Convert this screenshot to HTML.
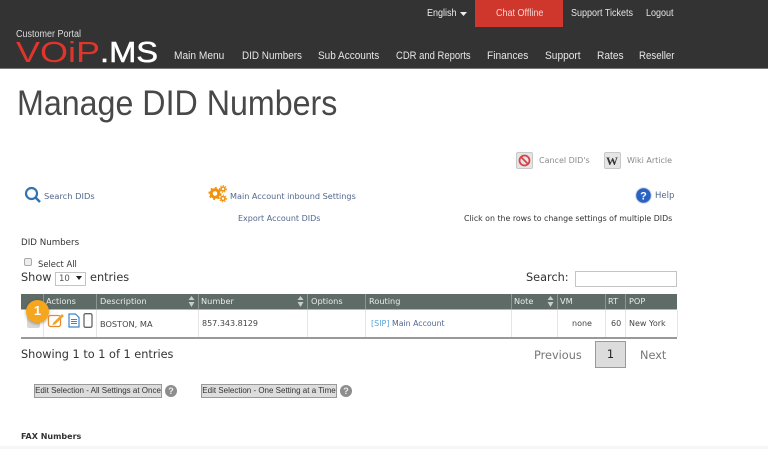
<!DOCTYPE html>
<html lang="en"><head><meta charset="utf-8"><title>Manage DID Numbers</title>
<style>
html,body{margin:0;padding:0;background:#fff}
#p{position:relative;width:768px;height:449px;overflow:hidden;background:#fff;font-family:"DejaVu Sans",sans-serif;color:#333}
#p div,#p svg{position:absolute}
.t{position:absolute;white-space:nowrap;line-height:14px;height:14px}
.n{font:11px/14px "Liberation Sans",sans-serif;color:#e6e6e6;transform:scaleX(.925);transform-origin:0 0}
.n2{font:10px/14px "Liberation Sans",sans-serif;color:#e6e6e6;transform:scaleX(.9);transform-origin:0 0}
.v{font-size:8px;color:#444}
.l{font-size:8px;color:#52678f}
.g{font-size:8px;color:#8a8a8a}
.h{font-size:8.2px;color:#e8ece9}
.b{font-size:11.3px;color:#333}
.btn{box-sizing:border-box;height:14px;background:#ddd;border:1px solid #999;font:8px/12px "Liberation Sans",sans-serif;color:#333;text-align:center;white-space:nowrap;overflow:hidden}
.q{width:12px;height:12px;border-radius:50%;background:#8d8d8d;color:#eee;font:bold 9px/12px "Liberation Sans",sans-serif;text-align:center}
.sq{box-sizing:border-box;background:#e5e5e5;border:1px solid #c8c8c8;border-radius:2px}
.s{width:1px;top:310px;height:27px;background:#e6e6e6}
.hs{width:1px;top:294px;height:15px;background:#8b9592}
</style></head><body><div id="p">

<div style="left:0;top:0;width:768px;height:68px;background:#333"></div>
<div style="left:0;top:68px;width:768px;height:1px;background:#777"></div>
<div style="left:475px;top:0;width:88px;height:27px;background:#cf372c"></div>

<span class="t n2" style="left:427px;top:7px;color:#eee">English</span>
<svg style="left:460px;top:12px" width="8" height="5"><path d="M0 0H7L3.500 4Z" fill="#eee"/></svg>
<span class="t n2" style="left:496px;top:7px;color:#f3d6d2">Chat Offline</span>
<span class="t n2" style="left:571px;top:7px">Support Tickets</span>
<span class="t n2" style="left:646px;top:7px">Logout</span>

<span class="t n2" style="left:16px;top:28px;color:#ddd">Customer Portal</span>
<svg style="left:16px;top:38px" width="145" height="26"><text x="0" y="24" font-family="Liberation Sans" font-size="29" fill="#e0352a" textLength="84" lengthAdjust="spacingAndGlyphs">VOiP</text><text x="84" y="24" font-family="Liberation Sans" font-size="29" fill="#fff" stroke="#fff" stroke-width=".5" textLength="58" lengthAdjust="spacingAndGlyphs">.MS</text></svg>

<span class="t n" style="left:174px;top:49px">Main Menu</span>
<span class="t n" style="left:242px;top:49px;transform:scaleX(.9)">DID Numbers</span>
<span class="t n" style="left:318px;top:49px;transform:scaleX(.91)">Sub Accounts</span>
<span class="t n" style="left:396px;top:49px;transform:scaleX(.86)">CDR and Reports</span>
<span class="t n" style="left:487px;top:49px">Finances</span>
<span class="t n" style="left:545px;top:49px">Support</span>
<span class="t n" style="left:597px;top:49px">Rates</span>
<span class="t n" style="left:639px;top:49px;transform:scaleX(.88)">Reseller</span>

<span class="t" style="left:17px;top:84px;height:40px;line-height:40px;font-family:'Liberation Sans',sans-serif;font-size:35px;color:#484848;transform:scaleX(.92);transform-origin:0 0">Manage DID Numbers</span>

<div class="sq" style="left:516px;top:152px;width:17px;height:17px"></div>
<svg style="left:516px;top:152px" width="17" height="17"><circle cx="8.500" cy="8.500" r="5" fill="none" stroke="#d8424a" stroke-width="1.800"/><path d="M5 5L12 12" stroke="#d8424a" stroke-width="1.800"/></svg>
<span class="t g" style="left:539px;top:154px">Cancel DID's</span>
<div class="sq" style="left:604px;top:152px;width:17px;height:17px"></div>
<span class="t" style="left:606px;top:154px;font:bold 12px/14px 'Liberation Serif',serif;color:#333">W</span>
<span class="t g" style="left:627px;top:154px">Wiki Article</span>

<svg style="left:24px;top:186px" width="18" height="18"><circle cx="7.500" cy="7.500" r="5.500" fill="none" stroke="#2f74b5" stroke-width="2.200"/><path d="M11.500 11.500L16 16" stroke="#2f74b5" stroke-width="2.500"/></svg>
<span class="t l" style="left:44px;top:189px;font-size:8.300px">Search DIDs</span>

<svg style="left:208px;top:185px" width="20" height="18"><g fill="none" stroke="#f2920c"><circle cx="7" cy="8.500" r="3.800" stroke-width="3"/><circle cx="7" cy="8.500" r="5.800" stroke-width="1.500" stroke-dasharray="2 2.500"/><circle cx="15" cy="4" r="2" stroke-width="1.600"/><circle cx="15" cy="4" r="3.400" stroke-width="1" stroke-dasharray="1.300 1.300"/><circle cx="15" cy="13.500" r="2" stroke-width="1.600"/><circle cx="15" cy="13.500" r="3.400" stroke-width="1" stroke-dasharray="1.300 1.300"/></g></svg>
<span class="t l" style="left:230px;top:189px;font-size:8.100px">Main Account inbound Settings</span>
<span class="t l" style="left:238px;top:212px">Export Account DIDs</span>

<svg style="left:635px;top:187px" width="17" height="17"><circle cx="8.500" cy="8.500" r="7.800" fill="#2a62c4" stroke="#cfd6e2" stroke-width="1"/><text x="8.500" y="12.500" text-anchor="middle" font-family="Liberation Sans" font-weight="bold" font-size="11" fill="#fff">?</text></svg>
<span class="t l" style="left:655px;top:189px;font-size:8.500px">Help</span>
<span class="t v" style="left:464px;top:212px;font-size:7.850px;color:#333">Click on the rows to change settings of multiple DIDs</span>

<span class="t v" style="left:21px;top:236px;font-size:8.700px;color:#333">DID Numbers</span>
<div style="left:24px;top:258px;width:6px;height:6px;border:1px solid #aaa;background:#eee;border-radius:2px"></div>
<span class="t v" style="left:38px;top:257px;font-size:8.400px;color:#333">Select All</span>

<span class="t b" style="left:21px;top:271px">Show</span>
<div style="left:55px;top:272px;width:29px;height:12px;border:1px solid #c4c4c4;background:#fff"></div>
<span class="t" style="left:59px;top:272px;font-size:8.500px;color:#555">10</span>
<svg style="left:76px;top:276px" width="7" height="5"><path d="M0 0H6L3 4Z" fill="#222"/></svg>
<span class="t b" style="left:90px;top:271px">entries</span>

<span class="t b" style="left:526px;top:271px">Search:</span>
<div style="left:575px;top:271px;width:100px;height:14px;border:1px solid #c4c4c4;background:#fff"></div>

<div style="left:21px;top:294px;width:656px;height:15px;background:#5f6b67"></div>
<div style="left:21px;top:309px;width:656px;height:1px;background:#b5b5b5"></div>
<div style="left:21px;top:337px;width:656px;height:2px;background:#999"></div>
<div class="hs" style="left:43px"></div><div class="hs" style="left:96px"></div><div class="hs" style="left:198px"></div><div class="hs" style="left:307px"></div><div class="hs" style="left:365px"></div><div class="hs" style="left:511px"></div><div class="hs" style="left:557px"></div><div class="hs" style="left:605px"></div><div class="hs" style="left:625px"></div>
<div class="s" style="left:43px"></div><div class="s" style="left:96px"></div><div class="s" style="left:198px"></div><div class="s" style="left:307px"></div><div class="s" style="left:365px"></div><div class="s" style="left:511px"></div><div class="s" style="left:557px"></div><div class="s" style="left:605px"></div><div class="s" style="left:625px"></div><div class="s" style="left:677px"></div>

<span class="t h" style="left:46px;top:294px">Actions</span>
<span class="t h" style="left:100px;top:294px">Description</span>
<svg style="left:188px;top:296px" width="7" height="11"><path d="M3.500 0L6.500 4H.5ZM3.500 11L.5 6H6.500Z" fill="#c7cdca"/></svg>
<span class="t h" style="left:201px;top:294px">Number</span>
<svg style="left:297px;top:296px" width="7" height="11"><path d="M3.500 0L6.500 4H.5ZM3.500 11L.5 6H6.500Z" fill="#c7cdca"/></svg>
<span class="t h" style="left:311px;top:294px">Options</span>
<span class="t h" style="left:369px;top:294px">Routing</span>
<span class="t h" style="left:514px;top:294px">Note</span>
<svg style="left:547px;top:296px" width="7" height="11"><path d="M3.500 0L6.500 4H.5ZM3.500 11L.5 6H6.500Z" fill="#c7cdca"/></svg>
<span class="t h" style="left:560px;top:294px">VM</span>
<span class="t h" style="left:608px;top:294px">RT</span>
<span class="t h" style="left:629px;top:294px">POP</span>

<div style="left:27px;top:316px;width:13px;height:12px;background:#d8d8d8;border-radius:2px"></div>
<div style="left:26px;top:300px;width:23px;height:23px;border-radius:50%;background:#f5a61d;box-shadow:0 1px 3px rgba(0,0,0,.35)"></div>
<span class="t" style="left:26px;top:304px;width:23px;text-align:center;font:bold 13px/14px 'Liberation Sans',sans-serif;color:#fff">1</span>

<svg style="left:47px;top:312px" width="18" height="16"><rect x="1.500" y="3.500" width="12" height="11" rx="2" fill="#fff" stroke="#e8892b" stroke-width="1.300"/><path d="M6 11L15 2L17 4L8 12.500L5.500 13Z" fill="#f0a22e"/></svg>
<svg style="left:68px;top:313px" width="12" height="15"><path d="M1 1H7.500L11 4.500V14H1Z" fill="#fff" stroke="#3c86c8" stroke-width="1.200"/><path d="M3 6.500H9M3 8.500H9M3 10.500H9" stroke="#3c86c8"/></svg>
<svg style="left:83px;top:313px" width="10" height="15"><rect x="1" y=".7" width="8" height="13.600" rx="1.500" fill="#fff" stroke="#666" stroke-width="1.300"/></svg>

<span class="t v" style="left:100px;top:317px;font-size:8.200px">BOSTON, MA</span>
<span class="t v" style="left:202px;top:317px">857.343.8129</span>
<span class="t v" style="left:371px;top:317px;color:#5aa4d6">[SIP]</span>
<span class="t l" style="left:392px;top:317px;font-size:7.800px">Main Account</span>
<span class="t v" style="left:572px;top:317px">none</span>
<span class="t v" style="left:611px;top:317px">60</span>
<span class="t v" style="left:629px;top:317px">New York</span>

<span class="t b" style="left:21px;top:348px">Showing 1 to 1 of 1 entries</span>
<span class="t b" style="left:534px;top:349px;color:#777">Previous</span>
<div style="left:595px;top:341px;width:29px;height:25px;background:#dcdcdc;border:1px solid #999"></div>
<span class="t b" style="left:595px;top:348px;width:31px;text-align:center;color:#222">1</span>
<span class="t b" style="left:640px;top:349px;color:#777">Next</span>

<div class="btn" style="left:34px;top:384px;width:128px">Edit Selection - All Settings at Once</div>
<div class="q" style="left:165px;top:385px">?</div>
<div class="btn" style="left:201px;top:384px;width:136px">Edit Selection - One Setting at a Time</div>
<div class="q" style="left:340px;top:385px">?</div>

<span class="t v" style="left:21px;top:430px;font-weight:bold;color:#333">FAX Numbers</span>
<div style="left:0;top:446px;width:768px;height:3px;background:#f6f6f6"></div>
</div></body></html>
